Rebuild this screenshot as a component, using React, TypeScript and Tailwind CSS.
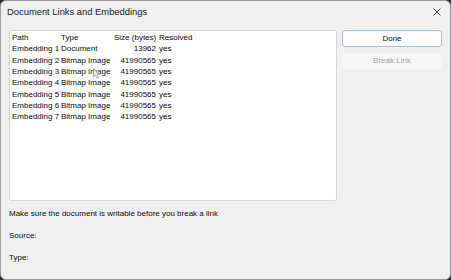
import React from "react";

const rows = [
  ["Embedding 1", "Document", "13962", "yes"],
  ["Embedding 2", "Bitmap Image", "41990565", "yes"],
  ["Embedding 3", "Bitmap Image", "41990565", "yes"],
  ["Embedding 4", "Bitmap Image", "41990565", "yes"],
  ["Embedding 5", "Bitmap Image", "41990565", "yes"],
  ["Embedding 6", "Bitmap Image", "41990565", "yes"],
  ["Embedding 7", "Bitmap Image", "41990565", "yes"],
];

export default function App() {
  return (
    <div className="w-[451px] h-[280px] bg-[#2e2a26]">
      <div
        className="w-[451px] h-[280px] bg-[#f0f0f0] border border-[#9a9ea3] rounded-[6px] flex flex-col text-[#0a0a0a] overflow-hidden"
        style={{ fontFamily: '"Liberation Sans", Arial, sans-serif' }}
      >
        <div className="h-[22px] flex items-center justify-between pl-[6px] pr-[8px] shrink-0">
          <span className="text-[9.4px] leading-none text-[#1a1a1a]">Document Links and Embeddings</span>
          <svg width="8" height="8" viewBox="0 0 8 8" className="mr-[1px]">
            <path d="M0.5 0.5 L7.5 7.5 M7.5 0.5 L0.5 7.5" stroke="#333" strokeWidth="0.9" />
          </svg>
        </div>
        <div className="flex pl-[8px] pt-[7px] gap-[5px]">
          <div className="relative w-[328px] h-[171px] bg-white border border-[#d5d5d5] rounded-[2px] pt-[1px] pl-[2px] text-[8px] leading-[11.33px]">
            <div className="flex whitespace-nowrap">
              <span className="w-[49px]">Path</span>
              <span className="w-[53px]">Type</span>
              <span className="w-[42px]">Size (bytes)</span>
              <span className="ml-[3px]">Resolved</span>
            </div>
            {rows.map((r) => (
              <div className="flex whitespace-nowrap" key={r[0]}>
                <span className="w-[49px]">{r[0]}</span>
                <span className="w-[53px]">{r[1]}</span>
                <span className="w-[42px] text-right">{r[2]}</span>
                <span className="ml-[3px]">{r[3]}</span>
              </div>
            ))}
            <svg
              className="absolute left-[83px] top-[37px]"
              width="8"
              height="11"
              viewBox="0 0 8 11"
            >
              <path d="M0.5 0.5 L0.5 9 L2.6 7 L4 10.3 L5.3 9.7 L4 6.6 L7 6.6 Z" fill="#ffffff" fillOpacity="0.6" stroke="#8a8a8a" strokeWidth="0.7" />
            </svg>
          </div>
          <div className="flex flex-col gap-[6px] w-[100px]">
            <div className="h-[17px] bg-[#fdfdfd] border border-[#9cc4e6] rounded-[3px] flex items-center justify-center text-[8px]">
              Done
            </div>
            <div className="h-[16px] bg-[#f6f6f6] rounded-[2px] flex items-center justify-center text-[8px] text-[#a3a3a3]">
              Break Link
            </div>
          </div>
        </div>
        <div className="pl-[8px] pt-[7px] flex flex-col gap-[11px] text-[8px] leading-[11px]">
          <span>Make sure the document is writable before you break a link</span>
          <span>Source:</span>
          <span>Type:</span>
        </div>
      </div>
    </div>
  );
}
